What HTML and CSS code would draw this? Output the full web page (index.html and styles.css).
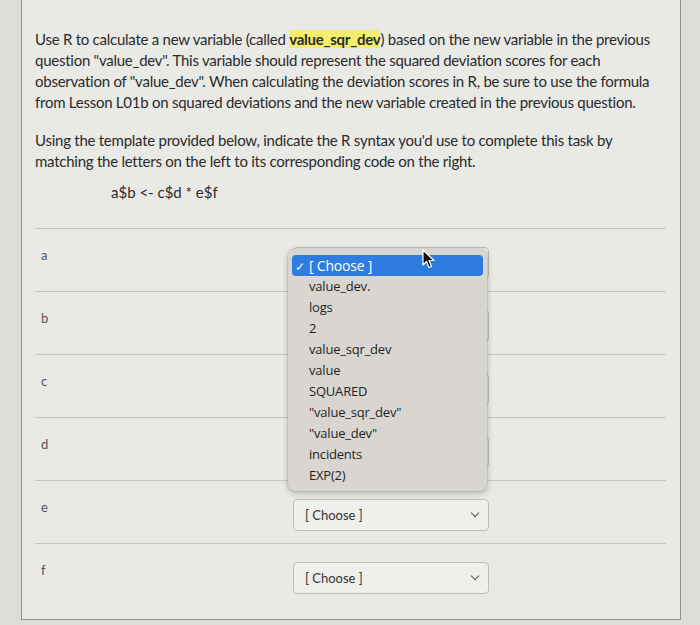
FILE: index.html
```html
<!DOCTYPE html>
<html>
<head>
<meta charset="utf-8">
<link rel="stylesheet" href="styles.css">
</head>
<body>
<div class="card">
  <div class="question">
    <p class="para">Use R to calculate a new variable (called <span class="hl">value_sqr_dev</span>) based on the new variable in the previous question "value_dev". This variable should represent the squared deviation scores for each observation of "value_dev". When calculating the deviation scores in R, be sure to use the formula from Lesson L01b on squared deviations and the new variable created in the previous question.</p>
    <p class="para para2">Using the template provided below, indicate the R syntax you'd use to complete this task by matching the letters on the left to its corresponding code on the right.</p>
    <p class="formula">a$b &lt;- c$d * e$f</p>
  </div>
  <div class="rows">
    <div class="row">
      <div class="label">a</div>
      <div class="select-wrap">
        <div class="select"><span>[ Choose ]</span><span class="chev"></span></div>
        <div class="popup">
          <div class="opt sel"><span class="check">✓</span>[ Choose ]</div>
          <div class="opt">value_dev.</div>
          <div class="opt">logs</div>
          <div class="opt">2</div>
          <div class="opt">value_sqr_dev</div>
          <div class="opt">value</div>
          <div class="opt">SQUARED</div>
          <div class="opt">"value_sqr_dev"</div>
          <div class="opt">"value_dev"</div>
          <div class="opt">incidents</div>
          <div class="opt">EXP(2)</div>
        </div>
        <svg class="cursor" width="14" height="20" viewBox="0 0 14 20"><path d="M1 1 L1 16 L4.5 12.5 L7 18.5 L9.5 17.5 L7 11.5 L12 11.5 Z" fill="#111" stroke="#fff" stroke-width="1.2" stroke-linejoin="round"/></svg>
      </div>
    </div>
    <div class="row">
      <div class="label">b</div>
      <div class="select-wrap"><div class="select"><span>[ Choose ]</span><span class="chev"></span></div></div>
    </div>
    <div class="row">
      <div class="label">c</div>
      <div class="select-wrap"><div class="select"><span>[ Choose ]</span><span class="chev"></span></div></div>
    </div>
    <div class="row">
      <div class="label">d</div>
      <div class="select-wrap"><div class="select"><span>[ Choose ]</span><span class="chev"></span></div></div>
    </div>
    <div class="row">
      <div class="label">e</div>
      <div class="select-wrap"><div class="select"><span>[ Choose ]</span><span class="chev"></span></div></div>
    </div>
    <div class="row last">
      <div class="label">f</div>
      <div class="select-wrap"><div class="select"><span>[ Choose ]</span><span class="chev"></span></div></div>
    </div>
  </div>
</div>
</body>
</html>
```

FILE: styles.css
```css
html, body {
  margin: 0;
  padding: 0;
}
body {
  background: #dcdcd9;
  font-family: Lato, "Liberation Sans", sans-serif;
  color: #2b2b2b;
  width: 700px;
  height: 625px;
  overflow: hidden;
}
.card {
  margin-left: 21px;
  width: 660px;
  height: 620px;
  background: #e9e9e6;
  border: 1px solid #8f8f8d;
  border-top: none;
  box-sizing: border-box;
  padding: 0 14px 0 13px;
  overflow: hidden;
}
.question {
  padding-top: 29px;
}
.para {
  margin: 0 0 17px 0;
  font-size: 15px;
  line-height: 21px;
  letter-spacing: -0.25px;
}
.para2 {
  margin-bottom: 10px;
}
.hl {
  background: #f3ee6c;
  font-weight: bold;
}
.formula {
  margin: 0;
  padding-left: 76px;
  font-size: 15px;
  line-height: 21px;
  padding-bottom: 25px;
}
.rows {
  display: flex;
  flex-direction: column;
}
.row {
  border-top: 1px solid #c6c6c3;
  height: 44px;
  display: flex;
  align-items: flex-start;
  padding-top: 18px;
}
.row.last {
  height: 58px;
}
.label {
  width: 252px;
  padding-left: 6px;
  font-size: 13px;
  color: #555;
  line-height: 16px;
}
.select-wrap {
  position: relative;
  width: 196px;
}
.select {
  height: 32px;
  box-sizing: border-box;
  border: 1px solid #bdbdba;
  border-radius: 4px;
  background: #efefec;
  display: flex;
  align-items: center;
  justify-content: space-between;
  padding: 0 10px 0 11px;
  font-size: 13px;
  color: #333;
}
.chev {
  width: 5px;
  height: 5px;
  border-right: 1.3px solid #555;
  border-bottom: 1.3px solid #555;
  transform: rotate(45deg);
  margin-top: -4px;
}
.popup {
  position: absolute;
  left: -5px;
  top: 2px;
  width: 199px;
  box-sizing: border-box;
  padding: 6px 4px 5px 4px;
  background: #d9d6d2;
  border-radius: 7px;
  box-shadow: 0 2px 6px rgba(0,0,0,0.25), 0 0 0 1px rgba(0,0,0,0.06);
  z-index: 2;
}
.opt {
  height: 21px;
  line-height: 21px;
  font-size: 13px;
  color: #1f1f1f;
  padding-left: 17px;
  font-family: "Open Sans", "Liberation Sans", sans-serif;
  letter-spacing: -0.2px;
}
.opt.sel {
  background: #2f7ce0;
  color: #fff;
  border-radius: 4px;
  padding-left: 3px;
  font-size: 14px;
}
.check {
  display: inline-block;
  width: 14px;
  font-size: 12px;
}
.cursor {
  position: absolute;
  left: 129px;
  top: 2px;
  z-index: 3;
}
```
